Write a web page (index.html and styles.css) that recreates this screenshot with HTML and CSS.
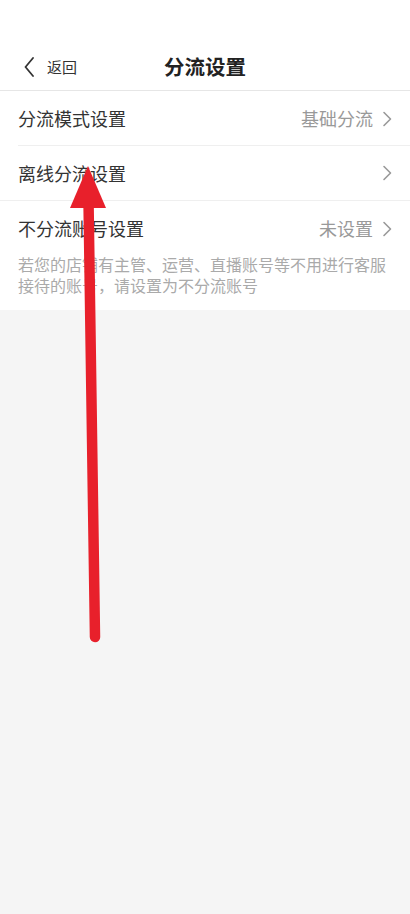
FILE: index.html
```html
<!DOCTYPE html>
<html lang="zh-CN">
<head>
<meta charset="utf-8">
<title>分流设置</title>
<link rel="stylesheet" href="styles.css">
</head>
<body>
<div class="page">
  <div class="statusbar"></div>
  <header class="navbar">
    <div class="back">
      <svg class="back-icon" viewBox="0 0 10 20" width="10" height="20"><path d="M9 1 L1.5 10 L9 19" fill="none" stroke="#333" stroke-width="1.8" stroke-linecap="round" stroke-linejoin="round"/></svg>
      <span class="back-text">返回</span>
    </div>
    <h1 class="title">分流设置</h1>
  </header>
  <section class="group">
    <div class="row row-inset">
      <span class="label">分流模式设置</span>
      <span class="value">基础分流</span>
      <svg class="chev" viewBox="0 0 10 16" width="10" height="16"><path d="M2 1.5 L8.5 8 L2 14.5" fill="none" stroke="#999" stroke-width="1.6" stroke-linecap="round" stroke-linejoin="round"/></svg>
    </div>
    <div class="row row-full">
      <span class="label">离线分流设置</span>
      <span class="value"></span>
      <svg class="chev" viewBox="0 0 10 16" width="10" height="16"><path d="M2 1.5 L8.5 8 L2 14.5" fill="none" stroke="#999" stroke-width="1.6" stroke-linecap="round" stroke-linejoin="round"/></svg>
    </div>
    <div class="row">
      <span class="label">不分流账号设置</span>
      <span class="value">未设置</span>
      <svg class="chev" viewBox="0 0 10 16" width="10" height="16"><path d="M2 1.5 L8.5 8 L2 14.5" fill="none" stroke="#999" stroke-width="1.6" stroke-linecap="round" stroke-linejoin="round"/></svg>
    </div>
    <p class="note">若您的店铺有主管、运营、直播账号等不用进行客服接待的账号，请设置为不分流账号</p>
  </section>
  <svg class="annotation" viewBox="0 0 410 914" width="410" height="914">
    <line x1="88.5" y1="200" x2="95" y2="637" stroke="#e8202b" stroke-width="10.5" stroke-linecap="round"/>
    <polygon points="88,166 70,208 106,208" fill="#e8202b"/>
  </svg>
</div>
</body>
</html>
```
FILE: styles.css
```css
* { box-sizing: border-box; }
html, body {
  margin: 0;
  padding: 0;
  background: #f5f5f5;
  font-family: "Noto Sans CJK SC", "Noto Sans", sans-serif;
}
.page {
  position: relative;
  width: 410px;
  min-height: 914px;
  background: #f5f5f5;
}
.statusbar {
  height: 45px;
  background: #fff;
}
.navbar {
  position: relative;
  height: 46px;
  background: #fff;
  border-bottom: 1px solid #e6e6e6;
  display: flex;
  align-items: center;
  justify-content: center;
}
.back {
  position: absolute;
  left: 24px;
  top: 0;
  height: 44px;
  display: flex;
  align-items: center;
  gap: 13px;
}
.back-icon { display: block; }
.back-text {
  font-size: 15px;
  color: #333;
  line-height: 1;
  margin-top: -2px;
}
.title {
  margin: 0;
  font-size: 20.5px;
  font-weight: 700;
  color: #222;
  line-height: 1;
  margin-top: -3px;
}
.group {
  background: #fff;
  padding-bottom: 14px;
}
.row {
  height: 55px;
  display: flex;
  align-items: center;
  padding: 0 18px;
  position: relative;
}
.row-inset::after {
  content: "";
  position: absolute;
  left: 18px;
  right: 0;
  bottom: 0;
  height: 1px;
  background: #efefef;
}
.row-full {
  border-bottom: 1px solid #efefef;
}
.label {
  flex: 1;
  font-size: 18px;
  color: #333;
  line-height: 1;
  margin-top: -1px;
}
.value {
  font-size: 18px;
  color: #999;
  line-height: 1;
  margin-right: 9px;
  margin-top: -1px;
}
.chev { display: block; }
.note {
  margin: -2px 0 0;
  padding: 0 18px;
  font-size: 16px;
  line-height: 21px;
  color: #aaa;
}
.annotation {
  position: absolute;
  left: 0;
  top: 0;
  pointer-events: none;
}
```
